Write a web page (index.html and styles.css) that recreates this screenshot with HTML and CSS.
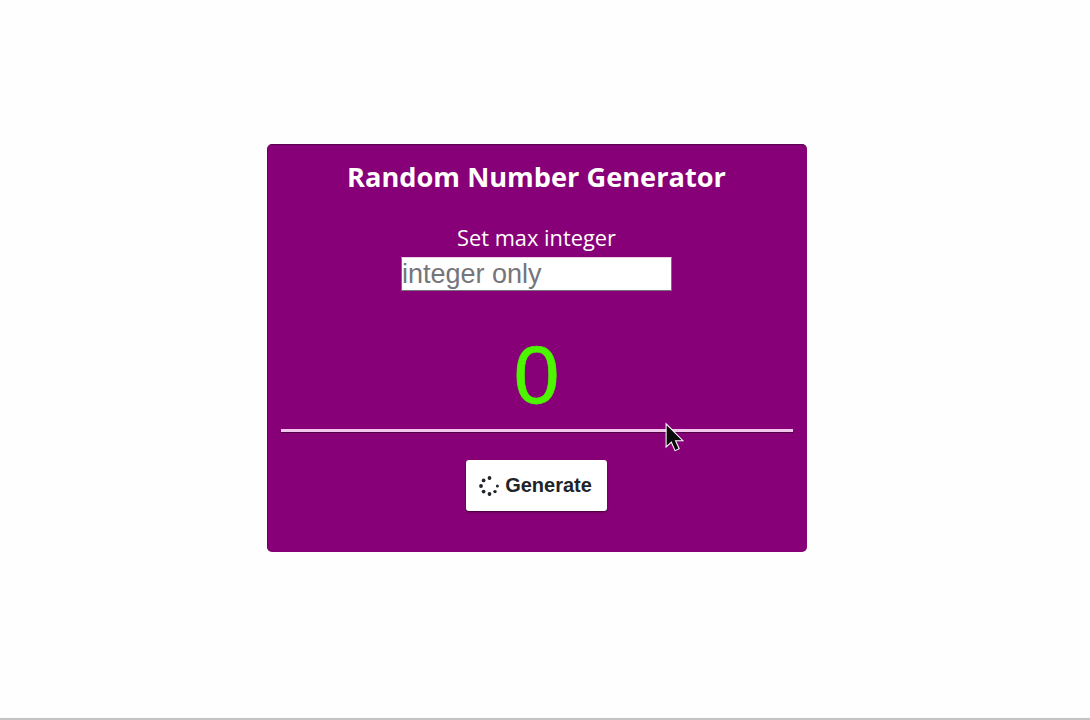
FILE: index.html
```html
<!DOCTYPE html>
<html lang="en">

<head>
  <meta charset="UTF-8">
  <title>Random Number Generator</title>
  <link rel="stylesheet" href="styles.css">
</head>

<body>
  <main class="page">
    <div class="card">
      <h1 class="card-title">Random Number Generator</h1>
      <label class="max-label" for="max-input">Set max integer</label>
      <input type="text" id="max-input" class="max-input" placeholder="integer only">
      <p class="result">0</p>
      <hr class="divider">
      <button class="generate-btn" type="button">
        <svg class="spinner" viewBox="0 0 20 20" width="20" height="20" fill="currentColor">
          <circle cx="10.5" cy="2" r="1.9"/>
          <circle cx="4.6" cy="4.4" r="1.9"/>
          <circle cx="2" cy="10" r="1.9"/>
          <circle cx="4.6" cy="15.6" r="1.9"/>
          <circle cx="10.5" cy="18" r="1.9"/>
          <circle cx="16" cy="15.6" r="1.7"/>
          <circle cx="18.4" cy="10" r="1.5"/>
        </svg>
        Generate
      </button>
      <svg class="cursor" viewBox="0 0 20 28" width="21" height="31">
        <path d="M2 1 L2 23 L7 18.5 L10.5 26.5 L14.5 24.8 L11 17 L18 17 Z" fill="#0c0c0c" stroke="#fff" stroke-width="1"/>
      </svg>
    </div>
  </main>
  <div class="bottom-line"></div>
</body>

</html>
```

FILE: styles.css
```css
* {
  margin: 0;
  padding: 0;
  box-sizing: border-box;
}

body {
  height: 720px;
  display: flex;
  flex-direction: column;
  background: #fefefe;
  overflow: hidden;
}

.page {
  flex: 1;
  padding: 144px 0 0 267px;
}

.card {
  position: relative;
  width: 540px;
  height: 408px;
  padding: 15px 2px 0 0;
  display: flex;
  flex-direction: column;
  align-items: center;
  background: #880077;
  border-radius: 5px;
  border-top: 1px solid #5a0050;
  border-left: 1px solid #6a005c;
  color: #ffffff;
}

.card-title {
  font-family: "Open Sans", sans-serif;
  font-size: 27.2px;
  font-weight: 700;
  line-height: 34px;
}

.max-label {
  margin-top: 30px;
  font-family: "Open Sans", sans-serif;
  font-size: 21.8px;
  line-height: 27px;
}

.max-input {
  width: 271px;
  height: 34px;
  margin-top: 6px;
  padding: 0;
  font-family: "Liberation Sans", sans-serif;
  font-size: 27px;
  background: #ffffff;
  border: 1px solid #77707a;
  border-top-color: #e6cde2;
  border-radius: 0;
  outline: none;
}

.max-input::placeholder {
  color: #75757a;
  opacity: 1;
}

.result {
  margin-top: 38px;
  font-family: "Liberation Sans", sans-serif;
  font-size: 82px;
  line-height: 92px;
  color: #4cf500;
  -webkit-text-stroke: 0.8px #4cf500;
}

.divider {
  width: 512px;
  height: 4px;
  margin-top: 8px;
  background: #f4c6ee;
  border: none;
  border-bottom: 1px solid #4c0042;
}

.generate-btn {
  display: flex;
  align-items: center;
  gap: 6px;
  height: 51px;
  margin-top: 27px;
  padding: 0 15px 0 13px;
  font-family: "Liberation Sans", sans-serif;
  font-size: 20px;
  font-weight: 700;
  color: #212529;
  background: #ffffff;
  border: none;
  border-radius: 3px;
  box-shadow: 0 1px 2px #3d0036;
}

.cursor {
  position: absolute;
  left: 396px;
  top: 277px;
}

.bottom-line {
  height: 3px;
  background: #fafafa;
  border-bottom: 2px solid #c4c4c4;
}
```
